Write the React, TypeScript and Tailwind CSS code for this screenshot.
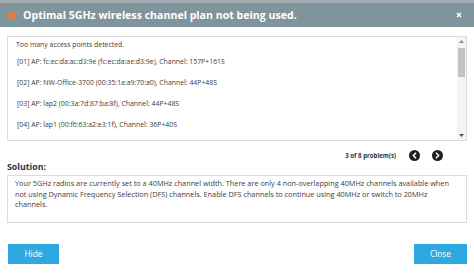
import React from "react";

function S({ children, className = "" }: { children: React.ReactNode; className?: string }) {
  return <span className={"inline-block whitespace-nowrap " + className}>{children}</span>;
}

function Chevron({ dir }: { dir: "left" | "right" }) {
  return (
    <div className="w-[11px] h-[11px] rounded-full bg-[#1e1e1e] flex items-center justify-center">
      <svg width="7" height="7" viewBox="0 0 7 7">
        {dir === "left" ? (
          <polyline points="4.6,1.2 2.3,3.5 4.6,5.8" fill="none" stroke="#fff" strokeWidth="1.6" strokeLinecap="round" strokeLinejoin="round" />
        ) : (
          <polyline points="2.4,1.2 4.7,3.5 2.4,5.8" fill="none" stroke="#fff" strokeWidth="1.6" strokeLinecap="round" strokeLinejoin="round" />
        )}
      </svg>
    </div>
  );
}

export default function App() {
  const lines = [
    "[01] AP: fc:ec:da:ac:d3:9e (fc:ec:da:ae:d3:9e), Channel: 157P+161S",
    "[02] AP: NW-Office-3700 (00:35:1a:a9:70:a0), Channel: 44P+48S",
    "[03] AP: lap2 (00:3a:7d:87:ba:8f), Channel: 44P+48S",
    "[04] AP: lap1 (00:f6:63:a2:e3:1f), Channel: 36P+40S",
  ];
  return (
    <div className="w-[474px] h-[274px] bg-white flex flex-col overflow-hidden font-['Open_Sans','Noto_Sans',sans-serif] text-[#333]">
      <div className="h-[3px] bg-[#a4adb1]" />
      <div className="h-[24px] bg-[#7f949c] flex items-center pl-[8px] pr-[12px]">
        <div className="w-[7px] h-[7px] rounded-full bg-[#f47a22] shrink-0" />
        <S className="ml-[8px] text-[10.6px] leading-[14px] font-bold text-white">
          Optimal 5GHz wireless channel plan not being used.
        </S>
        <svg className="ml-auto" width="6" height="6" viewBox="0 0 6 6">
          <line x1="1" y1="1" x2="5" y2="5" stroke="#fff" strokeWidth="1.5" />
          <line x1="5" y1="1" x2="1" y2="5" stroke="#fff" strokeWidth="1.5" />
        </svg>
      </div>

      <div className="px-[7px] flex flex-col">
        <div className="mt-[9px] h-[105px] border border-[#dcdcdc] flex">
          <div className="flex-1 pl-[8px] pt-[3px] text-[6.9px] leading-[10px] text-[#404040] overflow-hidden flex flex-col">
            <S>Too many access points detected.</S>
            <div className="mt-[7px] flex flex-col gap-[11px] pl-[1px]">
              {lines.map((l) => (
                <S key={l}>{l}</S>
              ))}
            </div>
          </div>
          <div className="w-[9px] bg-[#f3f3f3] flex flex-col items-center">
            <svg className="mt-[3px]" width="5" height="3" viewBox="0 0 5 3">
              <polygon points="2.5,0 5,3 0,3" fill="#8a8a8a" />
            </svg>
            <div className="mt-[5px] w-[7px] h-[29px] bg-[#c3c3c3]" />
            <div className="flex-1" />
            <svg className="mb-[3px]" width="5" height="3" viewBox="0 0 5 3">
              <polygon points="0,0 5,0 2.5,3" fill="#555" />
            </svg>
          </div>
        </div>

        <div className="mt-[9px] h-[11px] flex items-center justify-end pr-[24px]">
          <S className="text-[6.1px] leading-[10px] font-bold text-[#333]">3 of 8 problem(s)</S>
          <div className="ml-[13px]"><Chevron dir="left" /></div>
          <div className="ml-[12px]"><Chevron dir="right" /></div>
        </div>

        <div className="h-[12px] leading-[12px] text-[8.8px] font-bold text-[#333]">
          <S>Solution:</S>
        </div>

        <div className="mt-[2px] h-[48px] border border-[#dcdcdc] pl-[7px] pt-[2px] text-[7.3px] leading-[10.5px] text-[#404040] overflow-hidden flex flex-col">
          <S>
            Your 5GHz radios are currently set to a 40MHz channel width. There are only 4 non-overlapping 40MHz channels available when
          </S>
          <S>
            not using Dynamic Frequency Selection (DFS) channels. Enable DFS channels to continue using 40MHz or switch to 20MHz
          </S>
          <S>channels.</S>
        </div>

        <div className="mt-[21px] flex justify-between items-center">
          <div className="ml-[1px] w-[51px] h-[20px] bg-[#2ea8e0] flex items-center justify-center">
            <S className="text-[8.4px] text-white">Hide</S>
          </div>
          <div className="w-[53px] h-[20px] bg-[#2ea8e0] flex items-center justify-center">
            <S className="text-[8.4px] text-white">Close</S>
          </div>
        </div>
      </div>
    </div>
  );
}
